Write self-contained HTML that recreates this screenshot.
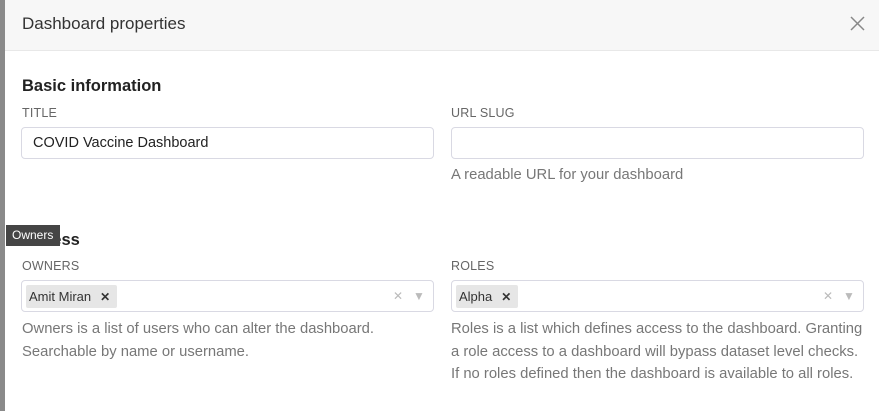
<!DOCTYPE html>
<html><head><style>
*{box-sizing:border-box;margin:0;padding:0}
body{width:879px;height:411px;overflow:hidden;background:#fff;font-family:"Liberation Sans",sans-serif;color:#323232;position:relative}
.strip{position:absolute;left:0;top:0;width:5px;height:411px;background:#8a8a8a}
.hdr{position:absolute;left:5px;top:0;width:874px;height:51px;background:#f7f7f7;border-bottom:1px solid #e8e8e8}
.hdr .t{position:absolute;left:17px;top:14px;font-size:17px;color:#333}
.close{position:absolute;left:845px;top:16px}
.abs{position:absolute}
h3{position:absolute;font-size:16.5px;font-weight:bold;color:#222}
.lbl{position:absolute;font-size:12.5px;color:#666;letter-spacing:.2px}
.inp{position:absolute;width:413px;height:32px;border:1px solid #d9d9e3;border-radius:4px;background:#fff}
.help{position:absolute;font-size:14.8px;color:#777;line-height:22.5px;white-space:nowrap}
.tag{position:absolute;left:4px;top:4px;height:23px;background:#e6e6e6;border-radius:2px;font-size:13px;color:#333;padding:4px 7px 0 3px}
.tag b{margin-left:9px;font-size:12px}
.ic{position:absolute;top:8px;color:#bbb;font-size:12px}
</style></head><body>
<div class="strip"></div>
<div class="hdr"><div class="t">Dashboard properties</div>
<svg class="close" width="15" height="15" viewBox="0 0 15 15"><path d="M1 1L14 14M14 1L1 14" stroke="#888" stroke-width="1.5"/></svg></div>
<h3 style="left:22px;top:77px">Basic information</h3>
<div class="lbl" style="left:22px;top:106px">TITLE</div>
<div class="inp" style="left:21px;top:127px"><span class="abs" style="left:11px;top:7px;font-size:14.5px;color:#222">COVID Vaccine Dashboard</span></div>
<div class="lbl" style="left:451px;top:106px">URL SLUG</div>
<div class="inp" style="left:451px;top:127px"></div>
<div class="help" style="left:451px;top:164px">A readable URL for your dashboard</div>
<h3 style="left:22px;top:231px">Access</h3>
<div class="abs" style="left:6px;top:225px;width:54px;height:21px;background:#454545;color:#fff;font-size:12px;padding:3px 0 0 6px">Owners</div>
<div class="lbl" style="left:22px;top:259px">OWNERS</div>
<div class="inp" style="left:21px;top:280px"><div class="tag">Amit Miran<b>✕</b></div><span class="ic" style="left:371px">✕</span><span class="ic" style="left:391px">▼</span></div>
<div class="help" style="left:22px;top:318px">Owners is a list of users who can alter the dashboard.<br>Searchable by name or username.</div>
<div class="lbl" style="left:451px;top:259px">ROLES</div>
<div class="inp" style="left:451px;top:280px"><div class="tag">Alpha<b>✕</b></div><span class="ic" style="left:371px">✕</span><span class="ic" style="left:391px">▼</span></div>
<div class="help" style="left:451px;top:318px">Roles is a list which defines access to the dashboard. Granting<br>a role access to a dashboard will bypass dataset level checks.<br>If no roles defined then the dashboard is available to all roles.</div>
</body></html>
